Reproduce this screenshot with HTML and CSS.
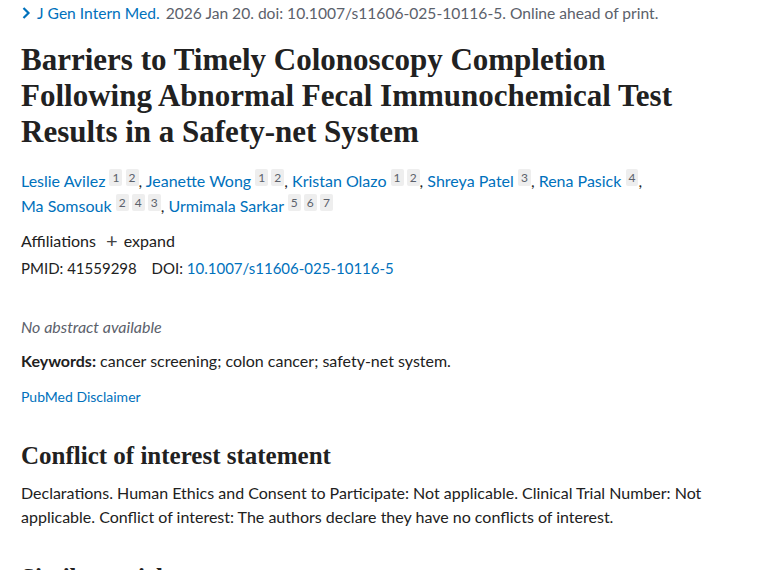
FILE: index.html
```html
<!DOCTYPE html>
<html lang="en">
<head>
<meta charset="utf-8">
<title>Barriers to Timely Colonoscopy Completion</title>
<link rel="stylesheet" href="styles.css">
</head>
<body>
<main class="article">
  <div class="citation">
    <svg class="chev" width="10" height="14" viewBox="0 0 10 14"><path d="M2.5 2 L7.5 7 L2.5 12" fill="none" stroke="#0071bc" stroke-width="2.2"/></svg>
    <a class="journal" href="#">J Gen Intern Med.</a>
    <span class="cit">2026 Jan 20. doi: 10.1007/s11606-025-10116-5. Online ahead of print.</span>
  </div>

  <h1 class="title">Barriers to Timely Colonoscopy Completion Following Abnormal Fecal Immunochemical Test Results in a Safety-net System</h1>

  <div class="authors">
    <a href="#">Leslie Avilez</a> <sup><span class="ref">1</span> <span class="ref">2</span></sup>, <a href="#">Jeanette Wong</a> <sup><span class="ref">1</span> <span class="ref">2</span></sup>, <a href="#">Kristan Olazo</a> <sup><span class="ref">1</span> <span class="ref">2</span></sup>, <a href="#">Shreya Patel</a> <sup><span class="ref">3</span></sup>, <a href="#">Rena Pasick</a> <sup><span class="ref">4</span></sup>,<br>
    <a href="#">Ma Somsouk</a> <sup><span class="ref">2</span> <span class="ref">4</span> <span class="ref">3</span></sup>, <a href="#">Urmimala Sarkar</a> <sup><span class="ref">5</span> <span class="ref">6</span> <span class="ref">7</span></sup>
  </div>

  <div class="affil">Affiliations <span class="expand"><span class="plus">+</span> expand</span></div>
  <div class="ids">PMID: 41559298 <span class="doi-label">DOI:</span> <a href="#">10.1007/s11606-025-10116-5</a></div>

  <p class="noabs">No abstract available</p>
  <p class="keywords"><strong>Keywords:</strong> cancer screening; colon cancer; safety-net system.</p>
  <a class="disclaimer" href="#">PubMed Disclaimer</a>

  <h2 class="section">Conflict of interest statement</h2>
  <p class="coi">Declarations. Human Ethics and Consent to Participate: Not applicable. Clinical Trial Number: Not applicable. Conflict of interest: The authors declare they have no conflicts of interest.</p>

  <h2 class="section similar">Similar articles</h2>
</main>
</body>
</html>
```
FILE: styles.css
```css
html, body {
  margin: 0;
  padding: 0;
  background: #fff;
  overflow: hidden;
}
body {
  font-family: "Segoe UI", Lato, "Open Sans", sans-serif;
  color: #212121;
  font-size: 16px;
}
a {
  color: #0071bc;
  text-decoration: none;
}
.article {
  padding: 2px 0 0 21px;
  width: 700px;
}
.citation {
  font-size: 15.6px;
  color: #5b616b;
  line-height: 22px;
  display: flex;
  align-items: center;
  gap: 6px;
}
.chev {
  flex: none;
}
.citation .journal {
  color: #0071bc;
}
.title {
  font-family: "Liberation Serif", "DejaVu Serif", serif;
  font-size: 31px;
  font-weight: bold;
  line-height: 36px;
  margin: 18px 0 0;
  width: 690px;
  color: #212121;
}
.authors {
  margin-top: 18px;
  line-height: 25px;
  font-size: 16px;
}
.authors sup {
  font-size: 12px;
  vertical-align: 5px;
  line-height: 0;
  color: #5b616b;
}
.ref {
  background: #eeeeee;
  border-radius: 2px;
  padding: 1px 3px;
}
.affil {
  margin-top: 10px;
  line-height: 24px;
}
.expand {
  margin-left: 6px;
}
.plus {
  font-size: 20px;
  color: #444;
  vertical-align: -1px;
  margin-right: 2px;
}
.ids {
  line-height: 24px;
  margin-top: 3px;
  font-size: 15px;
}
.doi-label {
  margin-left: 11px;
}
.noabs {
  font-style: italic;
  color: #5b616b;
  margin: 35px 0 0;
  line-height: 24px;
}
.keywords {
  margin: 10px 0 0;
  line-height: 24px;
}
.disclaimer {
  display: block;
  font-size: 14px;
  line-height: 20px;
  margin-top: 14px;
}
.section {
  font-family: "Liberation Serif", "DejaVu Serif", serif;
  font-weight: bold;
  font-size: 25px;
  line-height: 30px;
  margin: 34px 0 0;
}
.coi {
  margin: 10px 0 0;
  line-height: 24px;
  width: 690px;
}
.similar {
  margin-top: 34px;
}
```
